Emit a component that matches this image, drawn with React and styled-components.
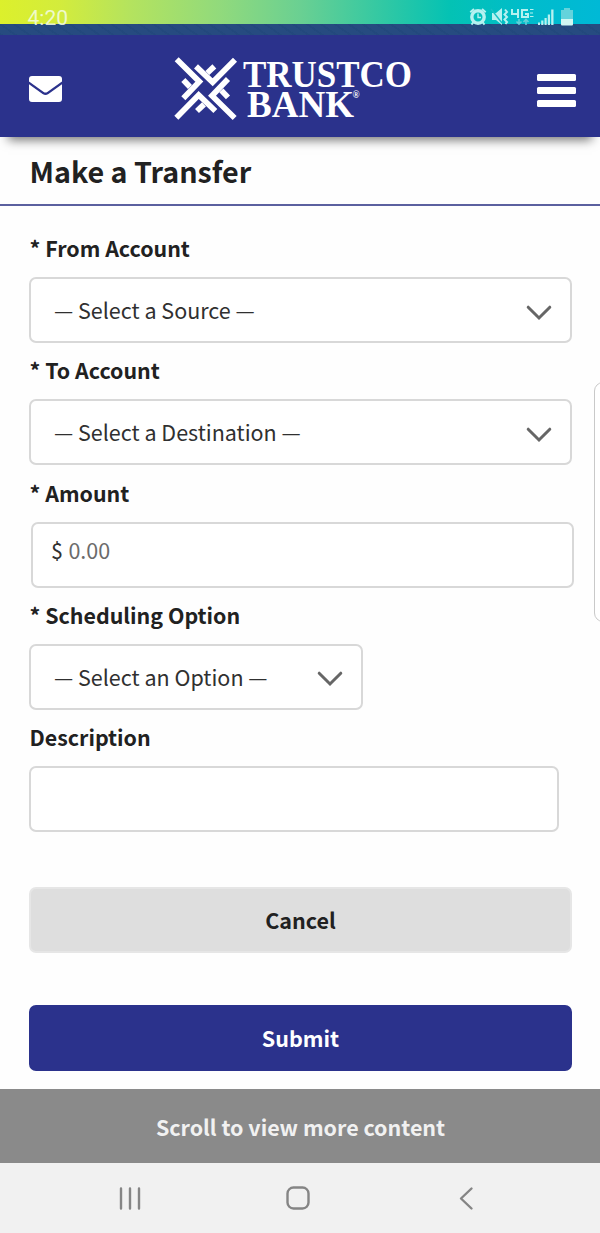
import React from "react";
import styled, { createGlobalStyle } from "styled-components";

const navy = "#2b328c";

const GlobalStyle = createGlobalStyle`
  * { box-sizing: border-box; }
  body {
    margin: 0;
    background: #fefefe;
    color: #212121;
    font-family: "Noto Sans CJK JP", "Noto Sans", sans-serif;
  }
`;

const Screen = styled.div`
  width: 600px;
  height: 1233px;
  display: flex;
  flex-direction: column;
  overflow: hidden;
  position: relative;
`;

const StatusBar = styled.div`
  flex: none;
  height: 35px;
  display: flex;
  justify-content: space-between;
  background:
    repeating-linear-gradient(35deg, rgba(20, 60, 110, 0.18) 0 2px, transparent 2px 8px) 0 24px / 100% 11px no-repeat,
    linear-gradient(#264b80, #264b80) 0 24px / 100% 11px no-repeat,
    linear-gradient(90deg, #dcf02c 0, #d3ec3c 60px, #b4e35e 130px, #91da7c 220px, #6ad092 300px, #30c8a4 385px, #04c2b4 450px, #00bccc 530px, #00b9d6 600px);
`;

const Clock = styled.span`
  margin: 6px 0 0 27.5px;
  font: 21px/24px Roboto, sans-serif;
  color: rgba(243, 252, 225, 0.88);
`;

const StatusIcons = styled.svg`
  width: 110px;
  height: 22px;
  margin: 6px 22px 0 0;
`;

const Header = styled.header`
  flex: none;
  height: 102px;
  padding: 0 24px 0 29px;
  display: flex;
  align-items: center;
  justify-content: space-between;
  background: ${navy};
  box-shadow: 0 11px 10px -8px rgba(0, 0, 0, 0.55);
  position: relative;
`;

const MailIcon = styled.svg`
  width: 33px;
  height: 26px;
  margin-top: 5px;
`;

const Brand = styled.svg`
  width: 250px;
  height: 70px;
  margin: 6px 0 0 -8px;
  overflow: visible;
`;

const MenuIcon = styled.div`
  width: 39px;
  height: 33px;
  margin-top: 9px;
  display: flex;
  flex-direction: column;
  justify-content: space-between;
`;

const MenuBar = styled.span`
  height: 7px;
  border-radius: 1.5px;
  background: #fff;
`;

const PageTitle = styled.h1`
  flex: none;
  margin: 0;
  height: 69px;
  padding-left: 29.5px;
  font-size: 28.7px;
  font-weight: 700;
  line-height: 67px;
  border-bottom: 2px solid #5b609f;
`;

const Form = styled.form`
  flex: 1;
  display: flex;
  flex-direction: column;
  padding: 13px 28px 0 29px;
`;

const Field = styled.div`
  height: 122.3px;
  flex: none;
  display: flex;
  flex-direction: column;
`;

const Label = styled.label`
  height: 58px;
  flex: none;
  padding-left: 0.5px;
  font-size: 21.4px;
  font-weight: 700;
  line-height: 58.4px;
`;

const Box = styled.div`
  width: ${(p) => p.$width || 543}px;
  margin-left: ${(p) => p.$shift || 0}px;
  height: 66px;
  flex: none;
  display: flex;
  align-items: center;
  justify-content: space-between;
  padding: 0 18px 1px 23px;
  border: 2px solid #d8d8d8;
  border-radius: 7px;
  background: #fff;
  font-size: 21.5px;
  color: #303030;
`;

const AmountBox = styled(Box)`
  justify-content: flex-start;
  gap: 5.5px;
  padding: 0 0 11px 18px;
`;

const Placeholder = styled.span`
  color: #6b6b6b;
`;

const Chevron = styled.svg`
  width: 26px;
  height: 16px;
  margin-top: 6px;
`;

const Button = styled.button`
  flex: none;
  width: 543px;
  height: 66px;
  padding: 0 0 2px;
  border: 2px solid ${(p) => (p.$primary ? navy : "#e6e6e6")};
  border-radius: 7px;
  background: ${(p) => (p.$primary ? navy : "#dedede")};
  color: ${(p) => (p.$primary ? "#fff" : "#212121")};
  font-family: inherit;
  font-size: 21.5px;
  font-weight: 700;
`;

const Actions = styled.div`
  display: flex;
  flex-direction: column;
  gap: 52px;
  margin-top: 57px;
`;

const ScrollHint = styled.div`
  flex: none;
  height: 74px;
  padding-left: 1px;
  text-align: center;
  line-height: 75px;
  font-size: 21.45px;
  font-weight: 700;
  color: #f1f1f1;
  background: #8a8a8a;
`;

const NavBar = styled.nav`
  flex: none;
  height: 70px;
  display: flex;
  align-items: center;
  justify-content: space-between;
  padding: 0 122.5px 0 118px;
  background: #f1f1f1;
`;

const NavIcon = styled.svg`
  width: 24px;
  height: 26px;
  fill: none;
  stroke: #858585;
  stroke-width: 2.4;
  stroke-linecap: round;
  stroke-linejoin: round;
`;

const EdgePanel = styled.div`
  position: absolute;
  top: 382px;
  right: -12px;
  width: 18px;
  height: 240px;
  border: 1px solid #c9c9c9;
  border-radius: 9px;
  background: #fff;
`;

function Select({ label, text, width }) {
  return (
    <Field>
      <Label>{label}</Label>
      <Box $width={width}>
        <span>{text}</span>
        <Chevron viewBox="0 0 26 16">
          <path d="M2.2 2.2 13 13 23.8 2.2" fill="none" stroke="#666" strokeWidth="3" strokeLinecap="round" />
        </Chevron>
      </Box>
    </Field>
  );
}

function Logo() {
  return (
    <Brand viewBox="170 54 250 70" fill="#fff">
      <g transform="translate(170 54) scale(0.33333)" fill="none" stroke="#fff" strokeWidth="17">
        {[0, 90, 180, 270].map((a) => (
          <g key={a} transform={`rotate(${a} 104 104)`}>
            <path d="M192 17 125 85 75 37" />
            <path d="M109 57 130 37" />
          </g>
        ))}
      </g>
      <g fontFamily="Liberation Serif, serif" fontWeight="700">
        <text x="242" y="86.5" fontSize="38.5" textLength="169" lengthAdjust="spacingAndGlyphs">TRUSTCO</text>
        <text x="246" y="116.8" fontSize="38" textLength="107" lengthAdjust="spacingAndGlyphs">BANK</text>
        <text x="351.5" y="98" fontSize="9.5">®</text>
      </g>
    </Brand>
  );
}

export default function App() {
  return (
    <Screen>
      <GlobalStyle />
      <StatusBar>
        <Clock>4:20</Clock>
        <StatusIcons viewBox="468 6 110 22" fill="#b6f1f0">
          <g fill="none" stroke="#b6f1f0" strokeWidth="2.4">
            <circle cx="478" cy="17" r="6.2" strokeWidth="3.4" />
            <path d="M470.3 12.2 474 9M482 9l3.7 3.2M473.5 22l-2 2.6M482.5 22l2 2.6" strokeWidth="2" />
            <path d="M478 13.5v4h3" strokeWidth="1.4" />
            <path d="M505 9.5l2 2.5-2.5 2.5 2.5 2.5-2.5 2.5 2.5 2.5-1.5 2" strokeWidth="2" />
          </g>
          <path d="M492 13h4l6-5v17l-6-5h-4z" />
          <path d="M491 9l11 14" stroke="#1abfc4" strokeWidth="1.4" />
          <path d="M512 9v5h7M518 9v9" fill="none" stroke="#b6f1f0" strokeWidth="2" />
          <path d="M528 10h-6v7h6v-3h-3" fill="none" stroke="#b6f1f0" strokeWidth="2" />
          <path d="M530 9.5h3.5M530 13h3M530 16.5h3.5" stroke="#b6f1f0" strokeWidth="1.2" />
          <path d="M519 19v5M516.5 21.5l2.5 2.5 2.5-2.5M526 25v-5M523.5 22l2.5-2.5 2.5 2.5" fill="none" stroke="#63cfd8" strokeWidth="1.6" />
          <path d="M538 22.5h2V25h-2zM541.2 20.5h2.2V25h-2.2zM544.5 18h2.2v7h-2.2zM547.8 14.5h2.2V25h-2.2zM551.2 9.5h2.3V25h-2.3z" />
          <path d="M564 8h6v2h3v9h-12v-9h3z" fill="#64d3dc" />
          <path d="M561 19h12v5.5q0 1-1 1h-10q-1 0-1-1z" fill="#d2f7f3" />
        </StatusIcons>
      </StatusBar>

      <Header>
        <MailIcon viewBox="0 0 33 26" fill="#fff">
          <path d="M3 0h27q3 0 3 3v2.4L18.3 16q-1.8 1.2-3.6 0L0 5.4V3Q0 0 3 0z" />
          <path d="M0 8.2 13.6 18q2.9 1.8 5.8 0L33 8.2V23q0 3-3 3H3q-3 0-3-3z" />
        </MailIcon>
        <Logo />
        <MenuIcon>
          <MenuBar />
          <MenuBar />
          <MenuBar />
        </MenuIcon>
      </Header>

      <PageTitle>Make a Transfer</PageTitle>

      <Form>
        <Select label="* From Account" text="— Select a Source —" />
        <Select label="* To Account" text="— Select a Destination —" />
        <Field>
          <Label>* Amount</Label>
          <AmountBox $shift={2}>
            <span>$</span>
            <Placeholder>0.00</Placeholder>
          </AmountBox>
        </Field>
        <Select label="* Scheduling Option" text="— Select an Option —" width={334} />
        <Field>
          <Label>Description</Label>
          <Box $width={530} />
        </Field>
        <Actions>
          <Button type="button">Cancel</Button>
          <Button type="button" $primary>Submit</Button>
        </Actions>
      </Form>

      <ScrollHint>Scroll to view more content</ScrollHint>
      <NavBar>
        <NavIcon viewBox="0 0 24 26"><path d="M3 3.5v20M12 3.5v20M21 3.5v20" /></NavIcon>
        <NavIcon viewBox="0 0 24 26"><rect x="1.5" y="2.5" width="21" height="21" rx="6" /></NavIcon>
        <NavIcon viewBox="0 0 24 26"><path d="M17.5 3.5 7 13.5 17.5 23.5" /></NavIcon>
      </NavBar>
      <EdgePanel />
    </Screen>
  );
}
